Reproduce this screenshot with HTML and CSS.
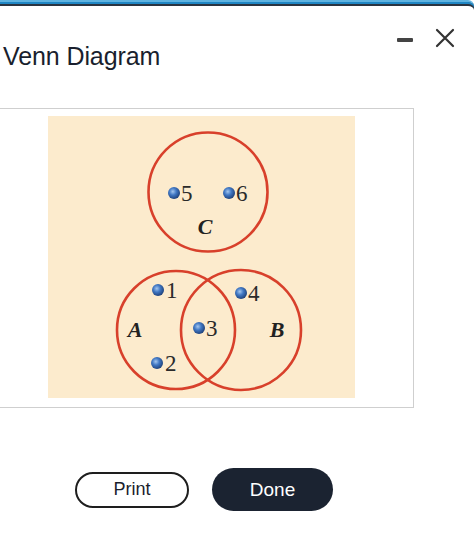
FILE: index.html
```html
<!DOCTYPE html>
<html>
<head>
    <title>Venn Diagram</title>
    <link rel="stylesheet" href="styles.css">
</head>
<body>
    <div class="window">
        <!-- Title bar -->
        <div class="title-row">
            <div class="title">Venn Diagram</div>
            <div class="controls">
                <span class="minimize"></span>
                <svg class="close" width="20" height="20" viewBox="0 0 20 20">
                    <path d="M2 2 L18 18 M18 2 L2 18" stroke="#333" stroke-width="2.2" stroke-linecap="round"/>
                </svg>
            </div>
        </div>

        <!-- Diagram -->
        <div class="figure-box">
            <svg class="venn" width="307" height="282" viewBox="0 0 307 282">
                <defs>
                    <radialGradient id="dot" cx="40%" cy="38%" r="65%">
                        <stop offset="0" stop-color="#a4c6ee"/>
                        <stop offset="0.45" stop-color="#4178c4"/>
                        <stop offset="1" stop-color="#1d3f78"/>
                    </radialGradient>
                </defs>
                <rect width="307" height="282" fill="#fcebcd"/>
                <g fill="none" stroke="#d8402b" stroke-width="2.6">
                    <circle cx="160" cy="76" r="59.5"/>
                    <circle cx="128" cy="214" r="59"/>
                    <circle cx="193" cy="214" r="60"/>
                </g>
                <g fill="url(#dot)">
                    <circle cx="126" cy="77" r="6"/>
                    <circle cx="181" cy="77" r="6"/>
                    <circle cx="110" cy="174" r="6"/>
                    <circle cx="193" cy="177" r="6"/>
                    <circle cx="151" cy="212" r="6"/>
                    <circle cx="109" cy="247" r="6"/>
                </g>
                <g class="num">
                    <text x="133" y="85">5</text>
                    <text x="188" y="85">6</text>
                    <text x="118" y="182">1</text>
                    <text x="200" y="185">4</text>
                    <text x="158" y="220">3</text>
                    <text x="117" y="255">2</text>
                </g>
                <g class="set">
                    <text x="157" y="118" text-anchor="middle">C</text>
                    <text x="87" y="221" text-anchor="middle">A</text>
                    <text x="229" y="221" text-anchor="middle">B</text>
                </g>
            </svg>
        </div>

        <!-- Buttons -->
        <div class="actions">
            <button class="btn btn-outline">Print</button>
            <button class="btn btn-dark">Done</button>
        </div>
    </div>
</body>
</html>
```

FILE: styles.css
```css
body {
    margin: 0;
    background: white;
    font-family: "Liberation Sans", Arial, sans-serif;
    color: #1a1f2e;
    overflow: hidden;
}

.window {
    height: 553px;
    border-top: 2px solid #5fb3e0;
    box-shadow: inset 0 2px 0 #1f86c4, inset 0 4px 0 #2b3440;
    border-top-right-radius: 6px;
    box-sizing: border-box;
}

.title-row {
    display: flex;
    justify-content: space-between;
    align-items: flex-start;
}

.title {
    font-size: 25px;
    margin-top: 40px;
    padding-left: 3px;
    letter-spacing: -0.1px;
}

.controls {
    display: flex;
    align-items: center;
    gap: 22px;
    margin-top: 26px;
    margin-right: 19px;
}

.minimize {
    display: block;
    width: 16px;
    height: 4px;
    background: #444;
    border-radius: 1px;
    margin-top: 3px;
}

.close {
    display: block;
}

.figure-box {
    width: 415px;
    height: 300px;
    margin-top: 37px;
    margin-left: -1px;
    border: 1px solid #cfcfcf;
    box-sizing: border-box;
    padding: 7px 0 0 48px;
}

.venn {
    display: block;
}

.num text {
    font-family: "Liberation Serif", "Times New Roman", serif;
    font-size: 23px;
    fill: #2a2a2a;
}

.set text {
    font-family: "Liberation Serif", "Times New Roman", serif;
    font-size: 22px;
    font-style: italic;
    font-weight: bold;
    fill: #222;
}

.actions {
    display: flex;
    align-items: center;
    gap: 23px;
    margin-top: 60px;
    padding-left: 75px;
}

.btn {
    font-family: "Liberation Sans", Arial, sans-serif;
    border-radius: 22px;
    cursor: pointer;
}

.btn-outline {
    width: 114px;
    height: 36px;
    background: white;
    border: 2px solid #1e1e1e;
    color: #1a1f2e;
    font-size: 18px;
}

.btn-dark {
    width: 121px;
    height: 43px;
    background: #1b2331;
    border: none;
    color: white;
    font-size: 19px;
}
```
